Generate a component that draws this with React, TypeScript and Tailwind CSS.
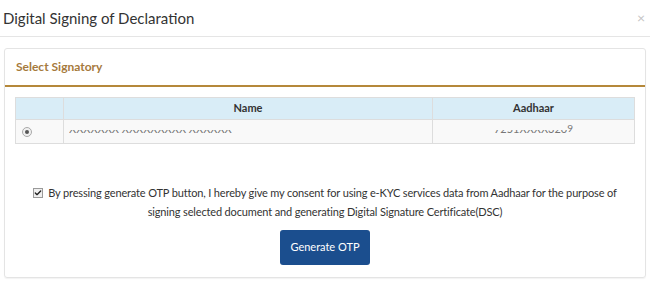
import { Check } from 'lucide-react'

const font = { fontFamily: '"Lato", "Open Sans", sans-serif' }

const Clipped = ({ text }: { text: string }) => (
  <span className="inline-block h-[5px] overflow-hidden align-middle">
    <span className="block leading-[12px] -mt-[7px]">{text}</span>
  </span>
)

export default function App() {
  return (
    <div className="w-[650px] h-[281px] bg-white overflow-hidden text-[#333]" style={font}>
      <div className="flex items-center justify-between h-[37px] pl-[3px] pr-[5px] border-b border-[#e5e5e5]">
        <span className="text-[15px] leading-none">Digital Signing of Declaration</span>
        <span className="text-[14px] leading-none text-[#c4c4c4]">×</span>
      </div>

      <div className="px-[4px] pt-[11px]">
        <div className="border border-[#e4e4e4] rounded-[3px] shadow-[0_1px_1px_rgba(0,0,0,0.05)] pb-[12px]">
          <div className="h-[38px] flex items-center px-[11px] border-b-2 border-[#b5883a]">
            <span className="text-[12px] font-bold text-[#a67a3d]">Select Signatory</span>
          </div>

          <div className="px-[10px] pt-[10px]">
            <table className="w-full border-collapse border border-[#dddddd] text-[11px]">
              <thead>
                <tr className="bg-[#d9edf7] h-[22px]">
                  <th className="w-[48px] border border-[#dddddd]"></th>
                  <th className="border border-[#dddddd] font-bold text-[#333]">Name</th>
                  <th className="w-[202px] border border-[#dddddd] font-bold text-[#333]">Aadhaar</th>
                </tr>
              </thead>
              <tbody>
                <tr className="bg-[#f9f9f9] h-[24px]">
                  <td className="border border-[#dddddd] pl-[6px]">
                    <span className="w-[10px] h-[10px] rounded-full border border-[#a9a9a9] bg-[#f0f0f0] flex items-center justify-center">
                      <span className="w-[4px] h-[4px] rounded-full bg-[#555]"></span>
                    </span>
                  </td>
                  <td className="border border-[#dddddd] pl-[5px] text-[#777]">
                    <Clipped text="XXXXXXX XXXXXXXXX XXXXXX" />
                  </td>
                  <td className="border border-[#dddddd] text-center text-[#777]">
                    <Clipped text="7251XXXX320" />
                    <span className="text-[10px] align-top leading-none">9</span>
                  </td>
                </tr>
              </tbody>
            </table>

            <div className="mt-[39px] text-center text-[11px] tracking-[-0.15px] leading-[19px] text-[#333] whitespace-nowrap">
              <span className="inline-flex w-[10px] h-[10px] border border-[#9a9a9a] bg-[#efefef] items-center justify-center align-middle mr-[5px] -mt-[2px]">
                <Check className="w-[8px] h-[8px] text-[#222]" strokeWidth={4} />
              </span>
              By pressing generate OTP button, I hereby give my consent for using e-KYC services data from Aadhaar for the purpose of
              <br />
              signing selected document and generating Digital Signature Certificate(DSC)
            </div>

            <div className="flex justify-center mt-[9px]">
              <button className="w-[90px] h-[35px] bg-[#1b4e8e] rounded-[3px] text-white text-[11px]">Generate OTP</button>
            </div>
          </div>
        </div>
      </div>
    </div>
  )
}
